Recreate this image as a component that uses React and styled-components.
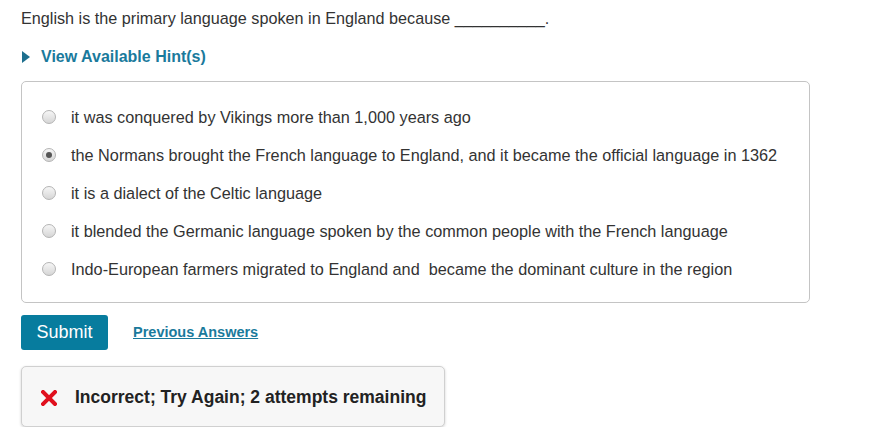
import React from "react";
import styled, { createGlobalStyle } from "styled-components";

const Global = createGlobalStyle`
  html, body { margin: 0; padding: 0; background: #fff; }
  body { font-family: "Liberation Sans", Arial, sans-serif; color: #333; }
`;

const Page = styled.div`
  padding: 8px 0 0 21px;
  width: 789px;
`;

const Question = styled.p`
  margin: 0;
  font-size: 16.2px;
  line-height: 20px;
  color: #333;
`;

const Hint = styled.button`
  display: flex;
  align-items: center;
  gap: 11px;
  margin: 19px 0 0 1px;
  padding: 0;
  border: 0;
  background: none;
  font-family: inherit;
  font-size: 16px;
  font-weight: bold;
  color: #1a7a9c;
  line-height: 20px;
  cursor: pointer;
`;

const Options = styled.div`
  margin-top: 14px;
  border: 1px solid #c4c4c4;
  border-radius: 5px;
  padding: 25px 0 23px 18px;
  display: flex;
  flex-direction: column;
  gap: 18px;
`;

const Option = styled.label`
  display: flex;
  align-items: center;
  gap: 15px;
  font-size: 16.25px;
  line-height: 20px;
  color: #333;
`;

const Radio = styled.span`
  width: 14px;
  height: 14px;
  box-sizing: border-box;
  border-radius: 50%;
  border: 1px solid #b4b4b4;
  background: linear-gradient(#f6f6f6, #d6d6d6);
  display: flex;
  align-items: center;
  justify-content: center;
  flex: none;
  margin-left: 2px;
  &::after {
    content: "";
    width: 6px;
    height: 6px;
    border-radius: 50%;
    background: #555;
    display: ${(p) => (p.$checked ? "block" : "none")};
  }
`;

const Actions = styled.div`
  display: flex;
  align-items: center;
  gap: 25px;
  margin-top: 12px;
`;

const Submit = styled.button`
  background: #077c9e;
  color: #fff;
  border: 0;
  border-radius: 3px;
  width: 87px;
  height: 35px;
  font-family: inherit;
  font-size: 18px;
  padding: 0;
`;

const PrevLink = styled.a`
  font-size: 14.5px;
  font-weight: bold;
  color: #1a7a9c;
  text-decoration: underline;
  margin-top: -1px;
`;

const Feedback = styled.div`
  margin-top: 16px;
  display: inline-flex;
  align-items: center;
  gap: 18px;
  box-sizing: border-box;
  width: 424px;
  height: 61px;
  padding: 2px 0 0 19px;
  background: #f7f7f7;
  border: 1px solid #d0d0d0;
  border-radius: 5px;
  box-shadow: 0 1px 3px rgba(0, 0, 0, 0.18);
  font-size: 17.5px;
  font-weight: bold;
  color: #222;
`;

const options = [
  "it was conquered by Vikings more than 1,000 years ago",
  "the Normans brought the French language to England, and it became the official language in 1362",
  "it is a dialect of the Celtic language",
  "it blended the Germanic language spoken by the common people with the French language",
  "Indo-European farmers migrated to England and\u00a0 became the dominant culture in the region",
];

export default function App() {
  return (
    <>
      <Global />
      <Page>
        <Question>
          English is the primary language spoken in England because __________.
        </Question>
        <Hint>
          <svg width="8" height="12" viewBox="0 0 8 12">
            <path d="M0 0 L8 6 L0 12 Z" fill="#1d6f8e" />
          </svg>
          View Available Hint(s)
        </Hint>
        <Options>
          {options.map((o, i) => (
            <Option key={i}>
              <Radio $checked={i === 1} />
              {o}
            </Option>
          ))}
        </Options>
        <Actions>
          <Submit>Submit</Submit>
          <PrevLink href="#">Previous Answers</PrevLink>
        </Actions>
        <div>
          <Feedback>
            <svg width="16" height="16" viewBox="0 0 16 16">
              <path
                d="M2 2 L14 14 M14 2 L2 14"
                stroke="#e0101e"
                strokeWidth="4"
                strokeLinecap="square"
              />
            </svg>
            Incorrect; Try Again; 2 attempts remaining
          </Feedback>
        </div>
      </Page>
    </>
  );
}
